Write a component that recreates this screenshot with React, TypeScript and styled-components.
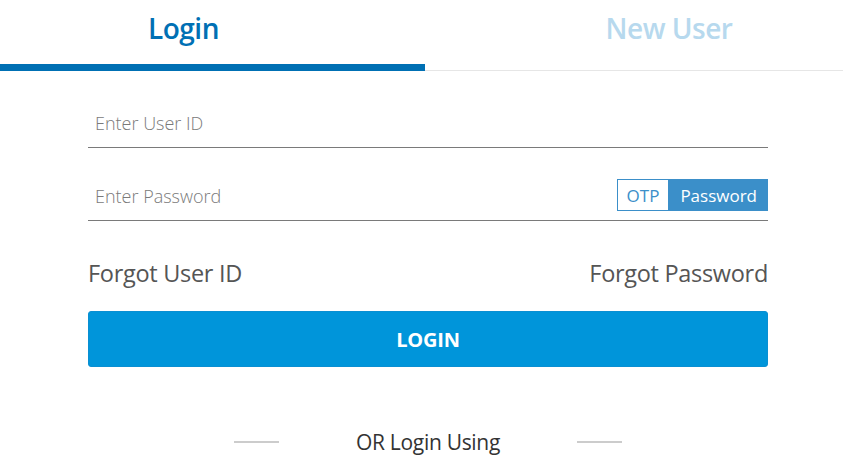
import React from 'react';
import styled, { createGlobalStyle } from 'styled-components';

const GlobalStyle = createGlobalStyle`
  html, body {
    margin: 0;
    padding: 0;
    background: #ffffff;
    font-family: "Open Sans", "Liberation Sans", Arial, sans-serif;
  }
`;

const Page = styled.div`
  width: 843px;
  height: 471px;
  overflow: hidden;
  background: #ffffff;
`;

const Tabs = styled.div`
  display: flex;
  height: 70px;
  border-bottom: 1px solid #e6e6e6;
`;

const Tab = styled.div<{ $active?: boolean; $shift: number }>`
  flex: 0 0 ${(p) => (p.$active ? '425px' : '418px')};
  display: flex;
  justify-content: center;
  padding-top: 9px;
  box-sizing: border-box;
  padding-left: ${(p) => (p.$shift > 0 ? p.$shift : 0)}px;
  padding-right: ${(p) => (p.$shift < 0 ? -p.$shift : 0)}px;
  font-size: 28px;
  font-weight: 600;
  letter-spacing: -0.5px;
  color: ${(p) => (p.$active ? '#0070b4' : '#b7d9ee')};
  border-bottom: 7px solid ${(p) => (p.$active ? '#0070b4' : 'transparent')};
  margin-bottom: -1px;
`;

const Form = styled.div`
  padding: 0 75px 0 88px;
  display: flex;
  flex-direction: column;
`;

const Field = styled.div<{ $top: number }>`
  display: flex;
  align-items: center;
  justify-content: space-between;
  height: 46px;
  margin-top: ${(p) => p.$top}px;
  border-bottom: 1px solid #7a7a7a;
  padding-left: 7px;
  padding-bottom: 8px;
  box-sizing: border-box;
`;

const Placeholder = styled.span`
  padding-top: 4px;
  font-size: 18px;
  color: #7a7a7a;
  font-weight: 300;
`;

const Toggle = styled.div`
  display: flex;
  height: 32px;
  margin-top: 3px;
`;

const ToggleOption = styled.div<{ $active?: boolean }>`
  display: flex;
  align-items: center;
  padding: 0 ${(p) => (p.$active ? '10px' : '9px')};
  font-size: 17px;
  box-sizing: border-box;
  border: 1px solid #3b8fc9;
  background: ${(p) => (p.$active ? '#3b8fc9' : '#ffffff')};
  color: ${(p) => (p.$active ? '#ffffff' : '#3b8fc9')};
`;

const Links = styled.div`
  display: flex;
  justify-content: space-between;
  margin-top: 36px;
`;

const LinkText = styled.span`
  font-size: 23.5px;
  color: #555555;
  letter-spacing: -0.3px;
`;

const LoginButton = styled.button`
  margin-top: 22px;
  height: 56px;
  border: 1px solid #0a8fd2;
  border-radius: 3px;
  background: #0095da;
  color: #ffffff;
  font-family: "Open Sans", "Liberation Sans", Arial, sans-serif;
  font-size: 20px;
  font-weight: 700;
  letter-spacing: -0.2px;
`;

const Divider = styled.div`
  display: flex;
  align-items: center;
  justify-content: center;
  gap: 77px;
  margin-top: 61px;
`;

const DividerLine = styled.div`
  width: 45px;
  height: 2px;
  background: #cccccc;
`;

const DividerText = styled.span`
  font-size: 21px;
  color: #333333;
  letter-spacing: -0.3px;
`;

const App: React.FC = () => {
  return (
    <Page>
      <GlobalStyle />
      <Tabs>
        <Tab $active $shift={-58}>Login</Tab>
        <Tab $shift={70}>New User</Tab>
      </Tabs>
      <Form>
        <Field $top={31}>
          <Placeholder>Enter User ID</Placeholder>
        </Field>
        <Field $top={27}>
          <Placeholder>Enter Password</Placeholder>
          <Toggle>
            <ToggleOption>OTP</ToggleOption>
            <ToggleOption $active>Password</ToggleOption>
          </Toggle>
        </Field>
        <Links>
          <LinkText>Forgot User ID</LinkText>
          <LinkText>Forgot Password</LinkText>
        </Links>
        <LoginButton>LOGIN</LoginButton>
        <Divider>
          <DividerLine />
          <DividerText>OR Login Using</DividerText>
          <DividerLine />
        </Divider>
      </Form>
    </Page>
  );
};

export default App;
